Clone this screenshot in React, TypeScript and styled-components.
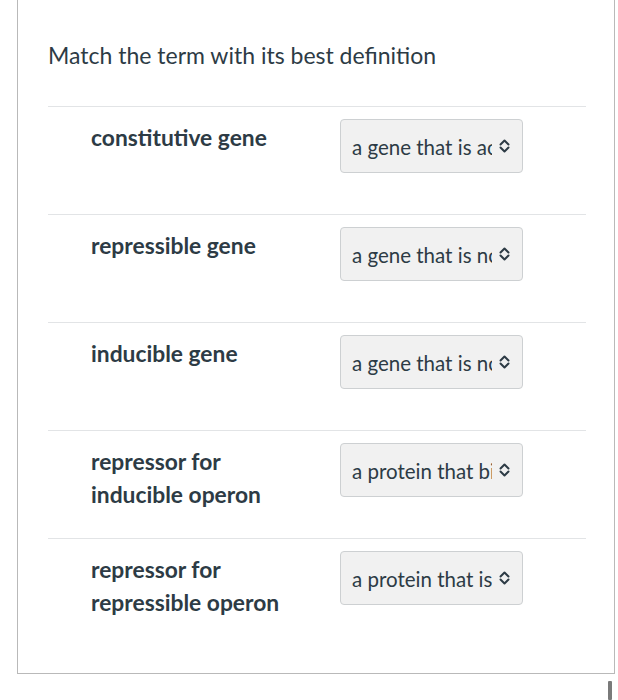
import React from "react";
import styled, { createGlobalStyle } from "styled-components";

const Global = createGlobalStyle`
  html, body { margin: 0; padding: 0; background: #ffffff; }
  body { font-family: Lato, "Open Sans", sans-serif; color: #2d3b45; }
`;

const Page = styled.div`
  position: relative;
  width: 618px;
  height: 700px;
  overflow: hidden;
`;

const Card = styled.div`
  box-sizing: border-box;
  margin-left: 17px;
  width: 598px;
  height: 674px;
  border: 1.5px solid #b9b9b9;
  border-top: none;
  padding: 38px 28px 0 30px;
`;

const Title = styled.div`
  font-size: 23px;
  line-height: 34px;
  font-weight: 400;
  color: #2d3b45;
  height: 68px;
`;

const Row = styled.div`
  box-sizing: border-box;
  height: 108px;
  border-top: 1.5px solid #e2e4e6;
  display: grid;
  grid-template-columns: 249px 183px;
  padding-left: 43px;
  padding-top: 12px;
  align-items: start;
`;

const Term = styled.div`
  font-size: 22.8px;
  font-weight: 700;
  line-height: 33px;
  color: #2d3b45;
  padding-top: 2px;
`;

const Select = styled.div`
  box-sizing: border-box;
  height: 54px;
  width: 183px;
  background: #f1f1f1;
  border: 1px solid #cdd0d2;
  border-radius: 4px;
  display: flex;
  align-items: center;
  padding: 0 12px 0 11px;
  gap: 7px;
`;

const SelectText = styled.span`
  flex: 1;
  min-width: 0;
  overflow: hidden;
  white-space: nowrap;
  font-size: 20.5px;
  color: #2d3b45;
  padding-top: 2px;
`;

const Chevron = styled.svg`
  flex: none;
  width: 11px;
  height: 14px;
`;

const Cursor = styled.div`
  position: absolute;
  left: 608px;
  top: 681px;
  width: 4px;
  height: 19px;
  background: #7a7a7a;
  border-radius: 1px;
`;

const rows = [
  { term: ["constitutive gene"], value: "a gene that is active all the time" },
  { term: ["repressible gene"], value: "a gene that is normally on" },
  { term: ["inducible gene"], value: "a gene that is normally off" },
  { term: ["repressor for", "inducible operon"], value: "a protein that binds" },
  { term: ["repressor for", "repressible operon"], value: "a protein that is" },
];

const UpDown = () => (
  <Chevron viewBox="0 0 11 14" fill="none">
    <path
      d="M1.5 5.5 L5.5 1.5 L9.5 5.5 M1.5 8.5 L5.5 12.5 L9.5 8.5"
      stroke="#2d3b45"
      strokeWidth="2"
      strokeLinecap="round"
      strokeLinejoin="round"
    />
  </Chevron>
);

export default function App() {
  return (
    <Page>
      <Global />
      <Card>
        <Title>Match the term with its best definition</Title>
        {rows.map((r, i) => (
          <Row key={i}>
            <Term>
              {r.term.map((t, j) => (
                <div key={j}>{t}</div>
              ))}
            </Term>
            <Select>
              <SelectText>{r.value}</SelectText>
              <UpDown />
            </Select>
          </Row>
        ))}
      </Card>
      <Cursor />
    </Page>
  );
}
